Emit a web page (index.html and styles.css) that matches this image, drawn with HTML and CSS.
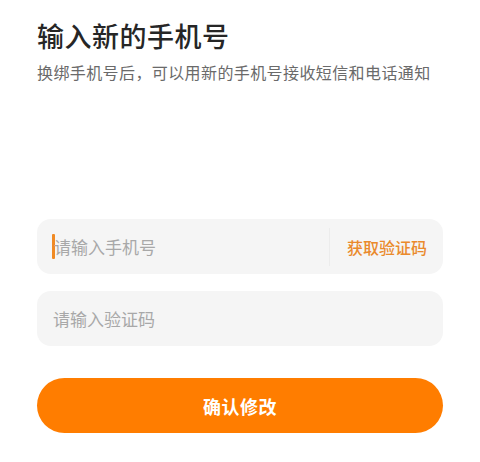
FILE: index.html
```html
<!DOCTYPE html>
<html lang="zh">
<head>
<meta charset="utf-8">
<link rel="stylesheet" href="styles.css">
</head>
<body>
<div class="page">
  <h1 class="title">输入新的手机号</h1>
  <p class="subtitle">换绑手机号后，可以用新的手机号接收短信和电话通知</p>
  <div class="form">
    <div class="field">
      <span class="caret"></span>
      <span class="placeholder">请输入手机号</span>
      <span class="divider"></span>
      <span class="code-btn">获取验证码</span>
    </div>
    <div class="field">
      <span class="placeholder">请输入验证码</span>
    </div>
    <button class="submit">确认修改</button>
  </div>
</div>
</body>
</html>
```
FILE: styles.css
```css
* { box-sizing: border-box; }
html, body { margin: 0; padding: 0; background: #fff; }
body {
  font-family: "Noto Sans CJK SC", "Noto Sans", sans-serif;
  width: 480px;
  height: 462px;
  overflow: hidden;
}
.page {
  padding: 17px 37px 0 37px;
}
.title {
  margin: 0;
  font-size: 27px;
  line-height: 38px;
  font-weight: 500;
  color: #262626;
  letter-spacing: 0.5px;
}
.subtitle {
  margin: 6px 0 0 0;
  font-size: 16px;
  line-height: 22px;
  color: #6a6a6a;
  letter-spacing: 0.4px;
}
.form {
  margin-top: 136px;
  display: flex;
  flex-direction: column;
  gap: 17px;
}
.field {
  height: 55px;
  background: #f5f5f5;
  border-radius: 14px;
  display: flex;
  align-items: center;
  padding: 0 16px 0 15px;
}
.caret {
  width: 3px;
  height: 25px;
  background: #f08a24;
  margin-right: -2px;
  border-radius: 1px;
}
.placeholder {
  font-size: 17px;
  color: #a8a8a8;
  flex: 1;
  padding-left: 1px;
}
.divider {
  width: 1px;
  height: 38px;
  background: #ececec;
  margin-right: 17px;
}
.code-btn {
  font-size: 16px;
  color: #ea8a2c;
  font-weight: 500;
}
.submit {
  margin-top: 15px;
  height: 55px;
  border: none;
  border-radius: 28px;
  background: #ff7d00;
  color: #fff;
  font-family: "Noto Sans CJK SC", "Noto Sans", sans-serif;
  font-size: 18px;
  font-weight: 700;
  letter-spacing: 0.5px;
}
```
